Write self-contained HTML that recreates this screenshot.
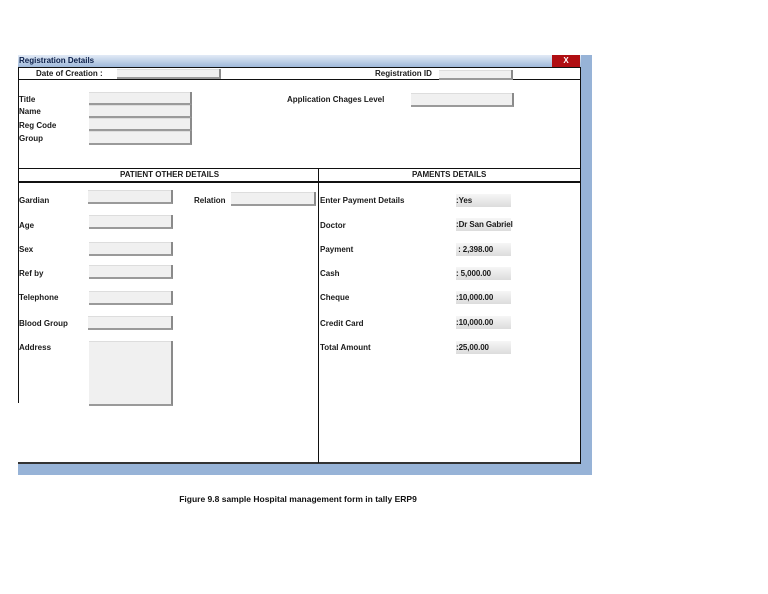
<!DOCTYPE html>
<html><head><meta charset="utf-8"><style>
*{margin:0;padding:0;box-sizing:border-box}
body{width:768px;height:594px;background:#fff;position:relative;overflow:hidden;font-family:"Liberation Sans",Arial,sans-serif}
.a{position:absolute}
.t{position:absolute;font-size:8px;font-weight:bold;color:#1a1a1a;line-height:10px;white-space:nowrap;letter-spacing:0}
.f{position:absolute;background:#f0f0f0;border-right:2px solid #8a8a8a;border-bottom:2px solid #9a9a9a;box-shadow:inset 0 1px 0 #ddd}
.v{position:absolute;left:456px;width:55px;height:13px;background:linear-gradient(#f6f6f6,#dcdcdc);font-size:8px;font-weight:bold;line-height:13px;color:#1a1a1a;white-space:nowrap;letter-spacing:-0.1px}
.h{position:absolute;background:#111}
</style></head><body>
<div class="a" style="left:18px;top:55px;width:574px;height:12px;background:linear-gradient(#e2eaf6,#9fb9da)"></div>
<div class="t" style="left:19px;top:56px;color:#0b1f4a">Registration Details</div>
<div class="a" style="left:552px;top:55px;width:28px;height:12px;background:#b00e12;color:#fff;font-size:8px;font-weight:bold;text-align:center;line-height:12px">X</div>
<div class="a" style="left:581px;top:55px;width:11px;height:420px;background:#97b3d7"></div>
<div class="a" style="left:18px;top:464px;width:574px;height:11px;background:#97b3d7"></div>
<div class="h" style="left:18px;top:67px;width:563px;height:1px"></div>
<div class="h" style="left:18px;top:79px;width:563px;height:1px"></div>
<div class="h" style="left:18px;top:168px;width:563px;height:1px"></div>
<div class="h" style="left:18px;top:181px;width:563px;height:2px"></div>
<div class="h" style="left:18px;top:462px;width:563px;height:2px;background:#333"></div>
<div class="h" style="left:18px;top:67px;width:1px;height:336px"></div>
<div class="h" style="left:580px;top:67px;width:1px;height:397px"></div>
<div class="h" style="left:318px;top:168px;width:1px;height:295px"></div>
<div class="t" style="left:36px;top:69px">Date of Creation :</div>
<div class="f" style="left:117px;top:69px;width:104px;height:10px"></div>
<div class="t" style="left:375px;top:69px">Registration ID</div>
<div class="f" style="left:439px;top:70px;width:74px;height:10px"></div>
<div class="t" style="left:19px;top:95px">Title</div>
<div class="t" style="left:19px;top:107px">Name</div>
<div class="t" style="left:19px;top:121px">Reg Code</div>
<div class="t" style="left:19px;top:134px">Group</div>
<div class="f" style="left:89px;top:92px;width:103px;height:13px"></div>
<div class="f" style="left:89px;top:105px;width:103px;height:13px"></div>
<div class="f" style="left:89px;top:118px;width:103px;height:13px"></div>
<div class="f" style="left:89px;top:131px;width:103px;height:14px"></div>
<div class="t" style="left:287px;top:95px">Application Chages Level</div>
<div class="f" style="left:411px;top:93px;width:103px;height:14px"></div>
<div class="t" style="left:120px;top:170px">PATIENT OTHER DETAILS</div>
<div class="t" style="left:412px;top:170px">PAMENTS DETAILS</div>
<div class="t" style="left:19px;top:196px">Gardian</div>
<div class="f" style="left:88px;top:190px;width:85px;height:14px"></div>
<div class="t" style="left:194px;top:196px">Relation</div>
<div class="f" style="left:231px;top:192px;width:85px;height:14px"></div>
<div class="t" style="left:19px;top:221px">Age</div>
<div class="f" style="left:89px;top:215px;width:84px;height:14px"></div>
<div class="t" style="left:19px;top:245px">Sex</div>
<div class="f" style="left:89px;top:242px;width:84px;height:14px"></div>
<div class="t" style="left:19px;top:269px">Ref by</div>
<div class="f" style="left:89px;top:265px;width:84px;height:14px"></div>
<div class="t" style="left:19px;top:293px">Telephone</div>
<div class="f" style="left:89px;top:291px;width:84px;height:14px"></div>
<div class="t" style="left:19px;top:319px">Blood Group</div>
<div class="f" style="left:88px;top:316px;width:85px;height:14px"></div>
<div class="t" style="left:19px;top:343px">Address</div>
<div class="f" style="left:89px;top:341px;width:84px;height:65px"></div>
<div class="t" style="left:320px;top:196px">Enter Payment Details</div>
<div class="v" style="top:194px">:Yes</div>
<div class="t" style="left:320px;top:221px">Doctor</div>
<div class="v" style="top:218px">:Dr San Gabriel</div>
<div class="t" style="left:320px;top:245px">Payment</div>
<div class="v" style="top:243px">&nbsp;: 2,398.00</div>
<div class="t" style="left:320px;top:269px">Cash</div>
<div class="v" style="top:267px">: 5,000.00</div>
<div class="t" style="left:320px;top:293px">Cheque</div>
<div class="v" style="top:291px">:10,000.00</div>
<div class="t" style="left:320px;top:319px">Credit Card</div>
<div class="v" style="top:316px">:10,000.00</div>
<div class="t" style="left:320px;top:343px">Total Amount</div>
<div class="v" style="top:341px">:25,00.00</div>
<div class="a" style="left:0;width:596px;top:494px;text-align:center;font-size:8.5px;font-weight:bold;color:#111">Figure 9.8 sample Hospital management form in tally ERP9</div>
</body></html>
